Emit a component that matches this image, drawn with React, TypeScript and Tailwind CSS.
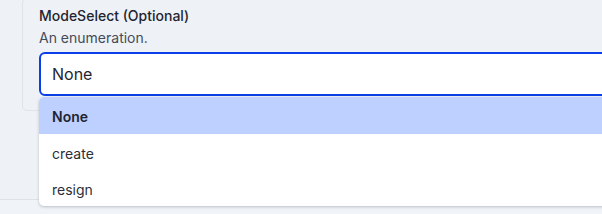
import React from 'react'

const OPTIONS = ['None', 'create', 'resign']

export default function App() {
  return (
    <div className="w-[602px] h-[214px] overflow-hidden bg-[#f0f3f7] font-['Inter',sans-serif]">
      <div className="relative h-[202px] border-b border-[#dde2e8] bg-[#eef2f7]">
        {/* field card */}
        <div className="ml-[22px] w-[640px] h-[113px] -mt-[2px] border border-[#dfe4ea] rounded-[5px] pl-[16px] pt-[7px]">
          <div className="text-[14px] leading-[20px] font-medium text-[#1f2430]">
            ModeSelect (Optional)
          </div>
          <div className="mt-[2px] text-[14px] leading-[20px] text-[#454b57]">
            An enumeration.
          </div>
          <div className="mt-[4px] h-[44px] rounded-[6px] border-2 border-[#0a3ee6] bg-white flex items-center pl-[11px] text-[16px] text-[#1f2430]">
            None
          </div>
        </div>

        {/* open dropdown list */}
        <div className="absolute left-[39px] top-[99px] w-[600px] bg-white rounded-[5px] overflow-hidden shadow-[0_1px_3px_rgba(30,40,60,0.25)]">
          {OPTIONS.map((o, i) => (
            <div
              key={o}
              className={
                i === 0
                  ? 'h-[37px] flex items-center pl-[13px] pt-[2px] text-[14px] font-semibold text-[#1f2430] bg-[#bdd0ff]'
                  : 'h-[36px] flex items-center pl-[13px] pt-[2px] text-[14px] text-[#2a2f3a]'
              }
            >
              {o}
            </div>
          ))}
        </div>
      </div>
    </div>
  )
}
